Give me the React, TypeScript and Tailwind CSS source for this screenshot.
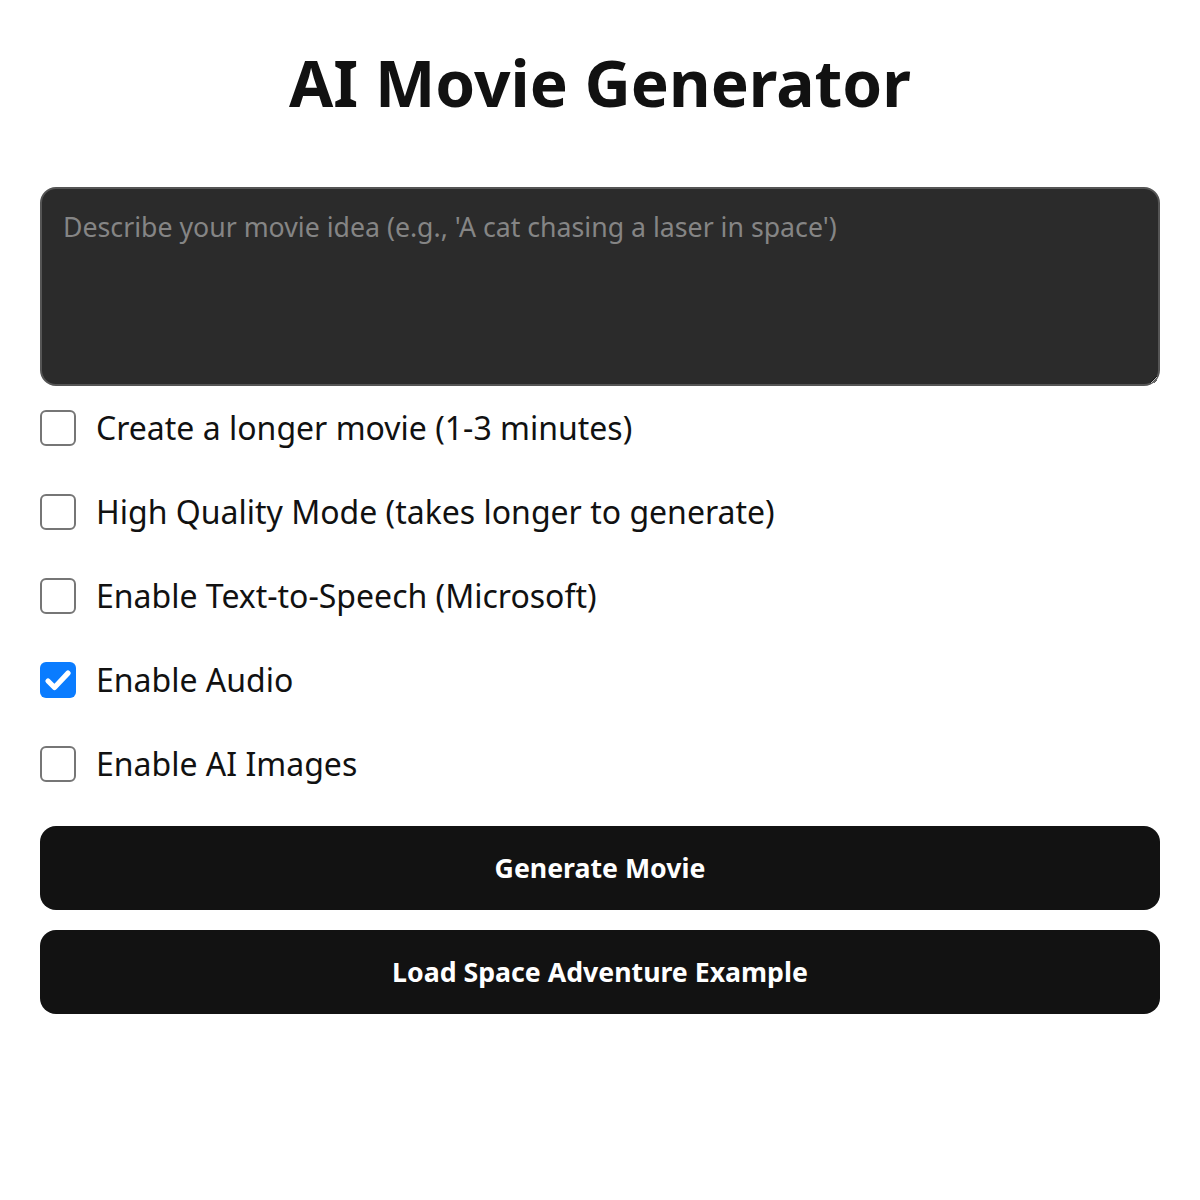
import { useState } from "react";

const options = [
  { id: "longer", label: "Create a longer movie (1-3 minutes)", checked: false },
  { id: "hq", label: "High Quality Mode (takes longer to generate)", checked: false },
  { id: "tts", label: "Enable Text-to-Speech (Microsoft)", checked: false },
  { id: "audio", label: "Enable Audio", checked: true },
  { id: "images", label: "Enable AI Images", checked: false },
];

export default function App() {
  const [state, setState] = useState<Record<string, boolean>>(
    Object.fromEntries(options.map((o) => [o.id, o.checked]))
  );

  return (
    <div className="min-h-[1200px] bg-white px-10 pt-[45px] font-['Noto_Sans',sans-serif] text-[#111]">
      <h1 className="text-center text-[64px] font-bold leading-[1.2] text-[#111]">AI Movie Generator</h1>

      <textarea
        className="mt-[65px] block h-[199px] w-full resize-y rounded-2xl border-2 border-[#555] bg-[#2b2b2b] px-[21px] py-[19px] text-[26.7px] leading-[1.4] text-white placeholder:text-[#858585] outline-none [color-scheme:dark]"
        placeholder="Describe your movie idea (e.g., 'A cat chasing a laser in space')"
      />

      <div className="flex flex-col">
        {options.map((o) => {
          const on = state[o.id];
          return (
            <label key={o.id} className="flex h-[84px] cursor-pointer items-center gap-[20px]">
              <input
                type="checkbox"
                className="sr-only"
                checked={on}
                onChange={() => setState((s) => ({ ...s, [o.id]: !s[o.id] }))}
              />
              {/* checkbox box */}
              <span
                className={
                  on
                    ? "flex h-[36px] w-[36px] items-center justify-center rounded-[6px] bg-[#0a7cff]"
                    : "flex h-[36px] w-[36px] items-center justify-center rounded-[6px] border-2 border-[#767676] bg-white"
                }
              >
                {on && (
                  <svg viewBox="0 0 24 24" className="h-[30px] w-[30px]" fill="none">
                    <path d="M4 12.8l5.2 5.2L20 6.5" stroke="white" strokeWidth="4.2" strokeLinecap="round" strokeLinejoin="round" />
                  </svg>
                )}
              </span>
              <span className="text-[32px] leading-none text-[#111]">{o.label}</span>
            </label>
          );
        })}
      </div>

      <div className="mt-[20px] flex flex-col gap-5">
        <button className="h-[84px] w-full rounded-2xl bg-[#121212] text-[26.7px] font-bold text-white">
          Generate Movie
        </button>
        <button className="h-[84px] w-full rounded-2xl bg-[#121212] text-[26.7px] font-bold text-white">
          Load Space Adventure Example
        </button>
      </div>
    </div>
  );
}
